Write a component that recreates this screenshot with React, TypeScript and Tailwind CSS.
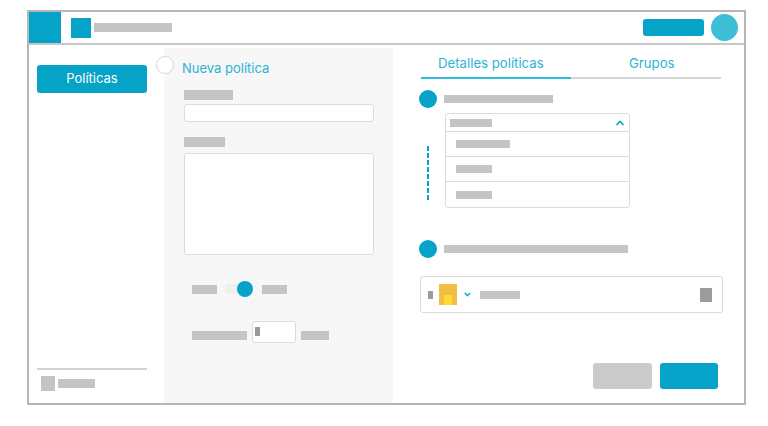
import { ChevronDown, ChevronUp } from "lucide-react";

const Bar = ({ className }: { className: string }) => <div className={`bg-[#c4c4c4] shrink-0 ${className}`} />;

export default function App() {
  return (
    <div className="w-[768px] h-[426px] bg-white overflow-hidden pl-[27px] pt-[10px] font-['Inter',sans-serif]">
      <div className="relative w-[719px] h-[395px] border-2 border-[#b6b6b6] flex flex-col">
        <header className="h-[31px] shrink-0 border-b-2 border-[#c8c8c8] flex items-center box-content">
          <div className="w-[32px] h-[31px] bg-[#05a3c7]" />
          <div className="ml-[10px] w-[20px] h-[20px] bg-[#05a3c7]" />
          <Bar className="ml-[3px] w-[78px] h-[9px]" />
          <div className="ml-auto w-[61px] h-[17px] rounded-[3px] bg-[#05a3c7]" />
          <div className="ml-[7px] mr-[6px] w-[27px] h-[27px] rounded-full bg-[#3ebfd8]" />
        </header>
        <div className="flex-1 flex pt-[3px] min-h-0">
          <aside className="w-[135px] shrink-0 flex flex-col pl-[8px] pr-[17px] pt-[17px] pb-[12px]">
            <div className="h-[28px] rounded-[3px] bg-[#05a3c7] text-white text-[13px] flex items-center justify-center">Políticas</div>
            <div className="mt-auto h-[2px] bg-[#d2d2d2]" />
            <div className="mt-[6px] ml-[4px] flex items-center gap-[3px]">
              <Bar className="w-[14px] h-[15px]" />
              <Bar className="w-[37px] h-[9px]" />
            </div>
          </aside>
          <section className="relative w-[229px] shrink-0 bg-[#f7f7f7] pl-[20px] pt-[10px]">
            <div className="absolute left-[-8px] top-[8px] w-[18px] h-[18px] rounded-full bg-white border border-[#d8d8d8]" />
            <h1 className="-ml-[2px] h-[20px] text-[13px] leading-[20px] text-[#2eb2d3]">Nueva política</h1>
            <Bar className="mt-[12px] w-[49px] h-[10px]" />
            <div className="mt-[4px] w-[190px] h-[18px] rounded-[3px] bg-white border border-[#dcdcdc]" />
            <Bar className="mt-[15px] w-[41px] h-[10px]" />
            <div className="mt-[6px] w-[190px] h-[102px] rounded-[3px] bg-white border border-[#dcdcdc]" />
            <div className="mt-[26px] ml-[8px] flex items-center">
              <Bar className="w-[25px] h-[9px]" />
              <div className="ml-[8px] relative w-[28px] h-[16px] flex items-center">
                <div className="w-[20px] h-[10px] bg-[#efefef]" />
                <div className="absolute right-0 top-0 w-[16px] h-[16px] rounded-full bg-[#05a3c7]" />
              </div>
              <Bar className="ml-[9px] w-[25px] h-[9px]" />
            </div>
            <div className="mt-[24px] ml-[8px] flex items-center">
              <Bar className="w-[55px] h-[9px] mt-[7px]" />
              <div className="ml-[5px] w-[44px] h-[22px] rounded-[3px] bg-white border border-[#dcdcdc] pl-[2px] pt-[5px]">
                <div className="w-[5px] h-[9px] bg-[#999999]" />
              </div>
              <Bar className="ml-[5px] w-[28px] h-[9px] mt-[7px]" />
            </div>
          </section>
          <main className="flex-1 min-w-0 pl-[26px] pr-[24px]">
            <div className="ml-[2px] w-[300px] h-[29px] flex text-[13.2px] text-[#2eb2d3] border-b-2 border-[#d6d6d6] box-content -mb-[2px]">
              <div className="relative w-[150px] pl-[17px] pt-[5px] leading-[20px]">
                Detalles políticas
                <div className="absolute left-0 right-0 -bottom-[2px] h-[2px] bg-[#2fbbdd]" />
              </div>
              <div className="w-[150px] pl-[58px] pt-[5px] leading-[20px]">Grupos</div>
            </div>
            <div className="mt-[13px] flex items-center h-[18px]">
              <div className="w-[18px] h-[18px] rounded-full bg-[#05a3c7]" />
              <Bar className="ml-[7px] w-[109px] h-[8px]" />
            </div>
            <div className="flex">
              <div className="w-[2px] ml-[8px] mt-[38px] h-[56px] bg-[repeating-linear-gradient(to_bottom,#05a3c7_0,#05a3c7_5px,transparent_5px,transparent_7px)]" />
              <div className="ml-[16px] mt-[5px] w-[185px] rounded-[3px] border border-[#dcdcdc] bg-white">
                <div className="h-[18px] border-b border-[#dcdcdc] flex items-center pl-[4px] pr-[3px] justify-between">
                  <Bar className="w-[42px] h-[8px]" />
                  <ChevronUp size={12} strokeWidth={3.5} className="text-[#05a3c7]" />
                </div>
                <div className="h-[25px] border-b border-[#dcdcdc] flex items-center pl-[10px]"><Bar className="w-[54px] h-[8px]" /></div>
                <div className="h-[25px] border-b border-[#dcdcdc] flex items-center pl-[10px]"><Bar className="w-[36px] h-[8px]" /></div>
                <div className="h-[25px] flex items-center pl-[10px]"><Bar className="w-[36px] h-[8px]" /></div>
              </div>
            </div>
            <div className="mt-[32px] flex items-center h-[18px]">
              <div className="w-[18px] h-[18px] rounded-full bg-[#05a3c7]" />
              <Bar className="ml-[7px] w-[184px] h-[8px]" />
            </div>
            <div className="mt-[18px] ml-[1px] w-[303px] h-[37px] rounded-[3px] border border-[#dcdcdc] bg-white flex items-center pl-[7px] pr-[10px]">
              <div className="w-[5px] h-[8px] bg-[#9c9c9c]" />
              <div className="relative ml-[6px] w-[18px] h-[21px] bg-[#f1bd45]">
                <div className="absolute left-[5px] bottom-0 w-[8px] h-[10px] bg-[#fbdc33]" />
              </div>
              <ChevronDown size={9} strokeWidth={4} className="ml-[6px] text-[#22a9cb]" />
              <Bar className="ml-[8px] w-[40px] h-[8px]" />
              <div className="ml-auto w-[12px] h-[14px] bg-[#9c9c9c]" />
            </div>
            <div className="mt-[50px] flex justify-end gap-[8px] pr-[2px]">
              <div className="w-[59px] h-[26px] rounded-[3px] bg-[#cbcbcb]" />
              <div className="w-[58px] h-[26px] rounded-[3px] bg-[#05a3c7]" />
            </div>
          </main>
        </div>
      </div>
    </div>
  );
}
